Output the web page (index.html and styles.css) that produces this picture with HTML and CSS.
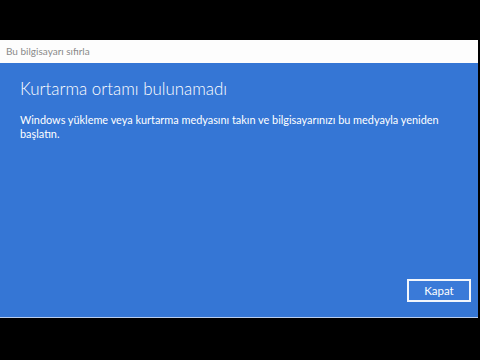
FILE: index.html
```html
<!DOCTYPE html>
<html>
<head>
    <meta charset="UTF-8">
    <title>Bu bilgisayarı sıfırla</title>
    <link rel="stylesheet" href="styles.css">
</head>
<body>
    <div class="screen">
        <div class="titlebar">Bu bilgisayarı sıfırla</div>
        <div class="panel">
            <div class="content">
                <h1>Kurtarma ortamı bulunamadı</h1>
                <p>Windows yükleme veya kurtarma medyasını takın ve bilgisayarınızı bu medyayla yeniden başlatın.</p>
            </div>
            <div class="actions">
                <button class="close-button">Kapat</button>
            </div>
        </div>
        <div class="edge"></div>
    </div>
</body>
</html>
```

FILE: styles.css
```css
body {
    margin: 0;
    background: #000;
    font-family: Lato, "Open Sans", sans-serif;
    width: 480px;
    height: 360px;
    overflow: hidden;
}

.screen {
    margin-top: 40px;
    width: 478px;
    display: flex;
    flex-direction: column;
}

.titlebar {
    height: 23px;
    background: #fdfdfd;
    color: #8a8a8a;
    font-size: 10px;
    line-height: 23px;
    padding-left: 6px;
}

.panel {
    height: 254px;
    background: #3576d5;
    color: #fff;
    display: flex;
    flex-direction: column;
    justify-content: space-between;
}

.content {
    padding: 14px 20px 0 20px;
}

h1 {
    margin: 0;
    font-weight: 300;
    font-size: 16.9px;
    line-height: 24px;
}

p {
    margin: 12px 0 0 0;
    font-size: 10.9px;
    line-height: 14px;
    width: 425px;
}

.actions {
    display: flex;
    justify-content: flex-end;
    padding: 0 7px 15px 0;
}

.close-button {
    width: 64px;
    height: 23px;
    background: #3a7ad8;
    border: 2px solid #f2f6fc;
    color: #fff;
    font-family: inherit;
    font-size: 11.5px;
    padding: 0;
}

.edge {
    height: 1px;
    background: #b9cdee;
}
```
